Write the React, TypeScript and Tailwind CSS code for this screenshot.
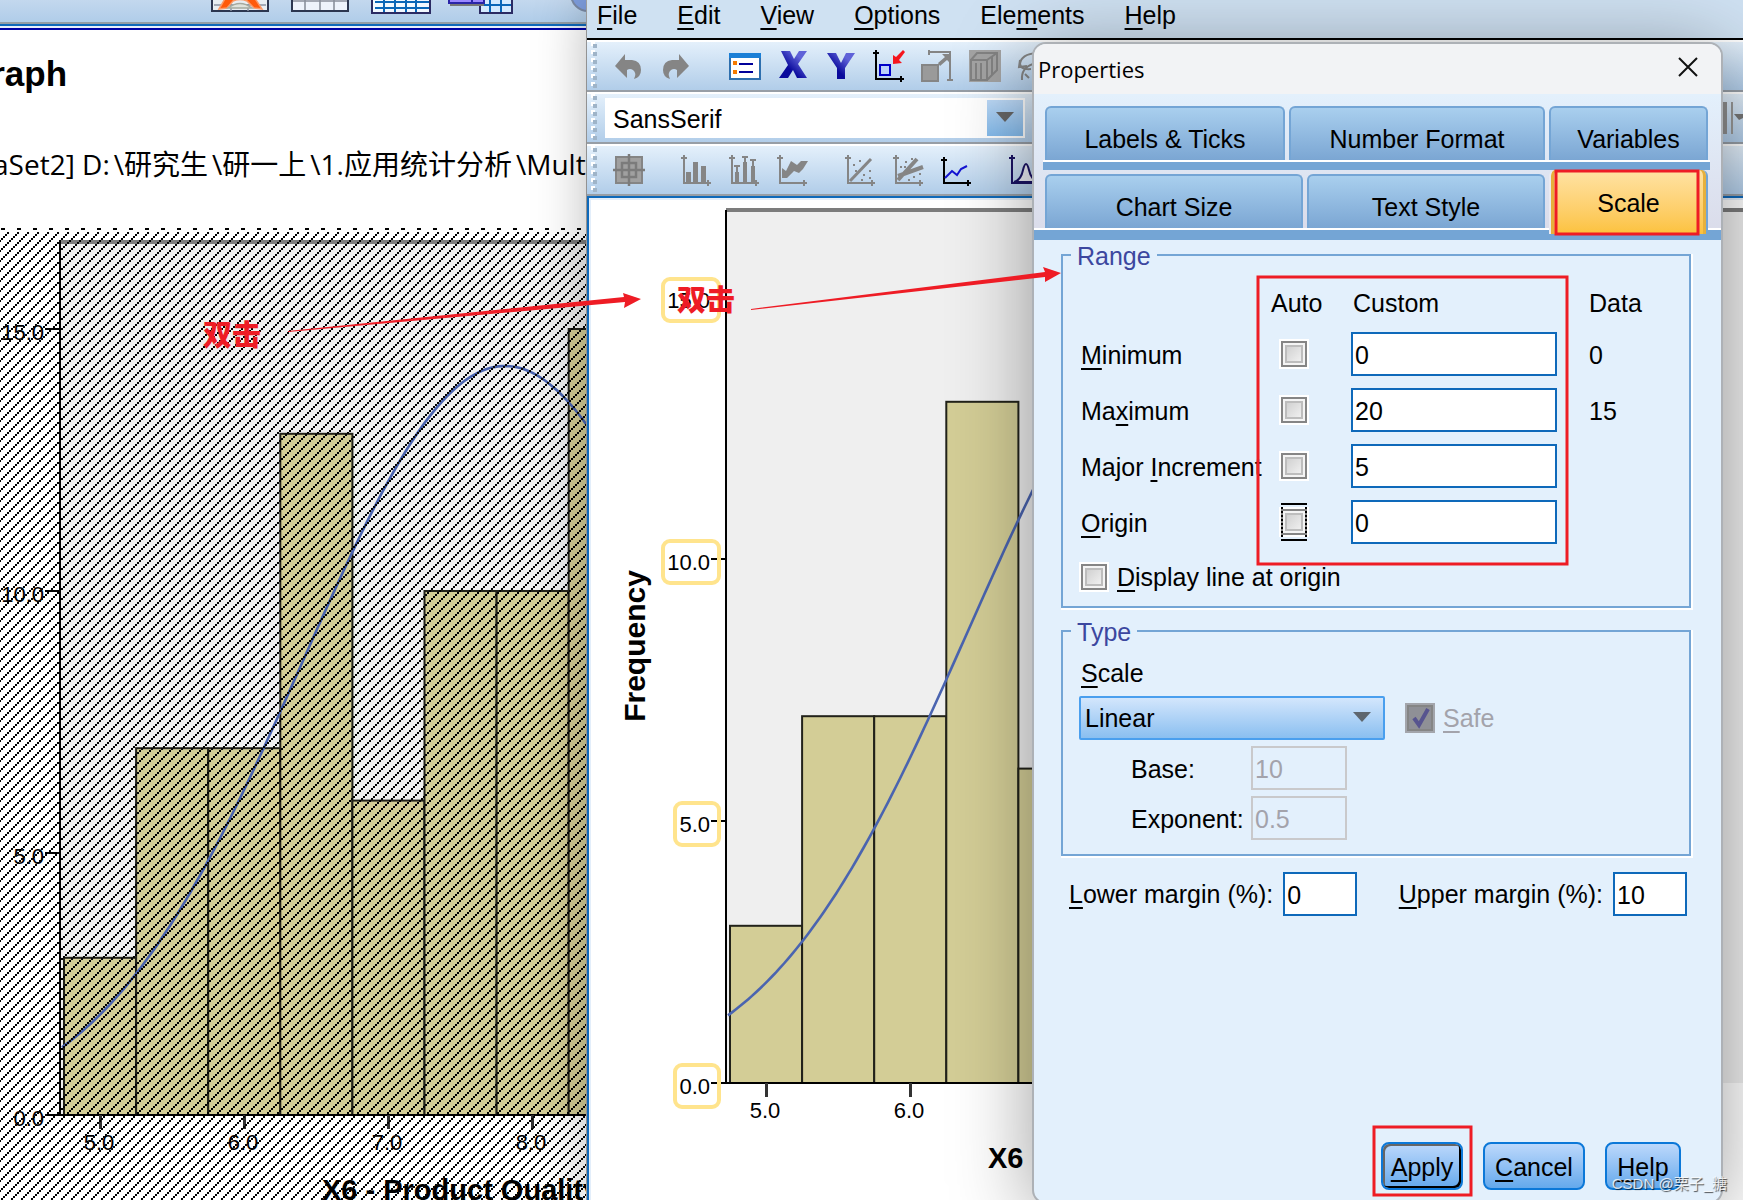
import React, { useState } from 'react';

const BAR_WIDTH = 72.1;
const UNIT = 52.4;
const BASE_Y = 873;
const COUNTS = [3, 7, 7, 13, 6, 10, 10, 15];

const curvePath = () => {
    const points: string[] = [];
    for (let x = 2; x <= 640; x += 4) {
        const y = BASE_Y - 749 * Math.exp(-((x - 445) ** 2) / (2 * 202 * 202));
        points.push(`${x},${y.toFixed(1)}`);
    }
    return points.join(' ');
};

interface HistogramProps {
    x: number;
    y: number;
    selected?: boolean;
    showYTitle?: boolean;
}

const Histogram: React.FC<HistogramProps> = ({ x, y, selected = false, showYTitle = false }) => (
    <g transform={`translate(${x} ${y})`} fontFamily='"Liberation Sans", Arial, sans-serif'>
        <rect x={0} y={0} width={2000} height={BASE_Y} fill="#efefef" />
        <rect x={0} y={-2} width={2000} height={4} fill="#7c7c7c" />
        {COUNTS.map((count, i) => (
            <rect
                key={i}
                x={4 + i * BAR_WIDTH}
                y={BASE_Y - count * UNIT}
                width={BAR_WIDTH}
                height={count * UNIT}
                fill="#d3cd96"
                stroke="#22221a"
                strokeWidth={2}
            />
        ))}
        <polyline points={curvePath()} fill="none" stroke="#4a64b0" strokeWidth={2.6} />
        <rect x={-1} y={0} width={2} height={BASE_Y} fill="#000" />
        <rect x={-1} y={BASE_Y - 1} width={900} height={2} fill="#000" />
        {[0, 5, 10, 15].map((value) => {
            const tickY = Math.round(BASE_Y - value * UNIT);
            const boxX = value >= 10 ? -63 : -51;
            return (
                <g key={value}>
                    <rect x={-15} y={tickY - 1} width={15} height={2} fill="#000" />
                    {selected && (
                        <rect x={boxX} y={tickY - 18} width={-7 - boxX} height={42} rx={7} fill="none" stroke="#ffe48d" strokeWidth={4} />
                    )}
                    <text x={-16} y={tickY + 11} fontSize={22} textAnchor="end">{value.toFixed(1)}</text>
                </g>
            );
        })}
        {[5, 6, 7, 8].map((value, i) => (
            <g key={value}>
                <rect x={39 + i * 144} y={BASE_Y} width={3} height={14} fill="#333" />
                <text x={39 + i * 144} y={908} fontSize={22} textAnchor="middle">{value.toFixed(1)}</text>
            </g>
        ))}
        <text x={262} y={958} fontSize={29} fontWeight="bold">X6 - Product Quality</text>
        {showYTitle && (
            <text transform="translate(-81 436) rotate(-90)" fontSize={30} fontWeight="bold" textAnchor="middle">Frequency</text>
        )}
    </g>
);

/* ---------- output viewer behind the editor ---------- */

const ViewerToolbar = () => (
    <svg className="block h-[22px] w-full shrink-0" aria-hidden="true">
        <defs>
            <linearGradient id="viewerBar" x1="0" y1="0" x2="0" y2="1">
                <stop offset="0" stopColor="#c3d8ee" />
                <stop offset="1" stopColor="#b0cde9" />
            </linearGradient>
        </defs>
        <rect width="100%" height="22" fill="url(#viewerBar)" />
        <g>
            <rect x="212" y="-10" width="56" height="21" fill="#e8edf2" stroke="#2c3650" strokeWidth="2" />
            <path d="M231 11V4M248 11V4M214 5H266" stroke="#8a93a3" strokeWidth="1.5" />
            <path d="M219 9L226 -3H254L262 9L254 8L247 1Q240 -2 233 1L227 8Z" fill="#ff5a0a" stroke="#fb9a68" strokeWidth="1.5" />
            <path d="M228 8Q240 -1 252 8Z" fill="#dfe3dc" stroke="#a5aaa0" strokeWidth="1.5" />
        </g>
        <g>
            <rect x="292" y="-10" width="56" height="21" fill="#eef2fb" stroke="#2c3650" strokeWidth="2" />
            <path d="M305 -4V10M320 -4V10M334 -4V10M293 1H347" stroke="#8a8f9c" strokeWidth="1.6" />
        </g>
        <g>
            <rect x="372" y="-10" width="58" height="23" fill="#f2f8ff" stroke="#2b2b63" strokeWidth="2" />
            <path d="M375 2H429M375 8H429M384 -4V12M395 -4V12M406 -4V12M416 -4V12" stroke="#0a66b8" strokeWidth="2" />
        </g>
        <g>
            <rect x="480" y="-10" width="32" height="23" fill="#d4eaff" stroke="#2b2b63" strokeWidth="2" />
            <path d="M481 5H511M490 -4V12M501 -4V12" stroke="#0a66b8" strokeWidth="2" />
            <rect x="450" y="4" width="34" height="2" fill="#777" />
            <rect x="449" y="-6" width="35" height="9" fill="#9b88ff" stroke="#2a24a8" strokeWidth="2" />
            <path d="M472 -4V3" stroke="#2a24a8" strokeWidth="2" />
        </g>
        <circle cx="588" cy="-6" r="17" fill="#7f9fe0" stroke="#7c8ba6" strokeWidth="2" />
    </svg>
);

const pathParts = ['研究生', '研一上', '1.应用统计分析', 'Multivariate.sav'];

const ViewerWindow = () => (
    <div className="flex h-full w-full flex-col overflow-hidden bg-white">
        <ViewerToolbar />
        <div className="h-[2px] shrink-0 bg-[#939da6]" />
        <div className="h-[2px] shrink-0 bg-[#0e69ba]" />
        <div className="h-[2px] shrink-0 bg-[#e6f0fb]" />
        <div className="h-[2px] shrink-0 bg-[#0000a4]" />
        <h1 className="-ml-9 pt-6 text-[35px] leading-10 font-bold text-black">Graph</h1>
        <p className="-ml-[62px] flex pt-12 font-['Open_Sans','Noto_Sans_CJK_SC',sans-serif] text-[28px] leading-[44px] font-normal whitespace-nowrap text-black">
            <span>[DataSet2] D:</span>
            {pathParts.map((part) => (
                <span key={part} className="pl-1">
                    {'\\' + part}
                </span>
            ))}
        </p>
        <svg className="mt-[42px] min-h-0 w-full flex-1">
            <defs>
                <pattern id="hatch" x="-1" y="4" width="10" height="10" patternUnits="userSpaceOnUse">
                    <path d="M8 0h2v2h-2zM6 2h2v2h-2zM4 4h2v2h-2zM2 6h2v2h-2zM0 8h2v2h-2z" fill="#000" shapeRendering="crispEdges" />
                </pattern>
            </defs>
            <Histogram x={60} y={14} />
            <rect x="0" y="4" width="100%" height="100%" fill="url(#hatch)" />
            <path d="M1 1H2000" stroke="#000" strokeWidth="2" strokeDasharray="4 12" />
        </svg>
    </div>
);

/* ---------- chart editor ---------- */

interface MnemonicProps {
    text: string;
    at?: number;
}

const Mnemonic: React.FC<MnemonicProps> = ({ text, at = 0 }) => (
    <>
        {text.slice(0, at)}
        <span className="underline decoration-2 underline-offset-4">{text[at]}</span>
        {text.slice(at + 1)}
    </>
);

const menus = [
    { text: 'File' },
    { text: 'Edit' },
    { text: 'View' },
    { text: 'Options' },
    { text: 'Elements', at: 3 },
    { text: 'Help' },
];

const Grip = () => (
    <svg className="h-[48px] w-[8px] shrink-0" aria-hidden="true">
        <defs>
            <pattern id="grip" width="6" height="8" patternUnits="userSpaceOnUse">
                <rect x="0" y="0" width="4" height="4" fill="#fff" />
                <rect x="2" y="2" width="4" height="4" fill="#9fb4c8" />
            </pattern>
        </defs>
        <rect width="6" height="48" fill="url(#grip)" />
    </svg>
);

interface ToolRowProps {
    children: React.ReactNode;
}

const ToolRow: React.FC<ToolRowProps> = ({ children }) => (
    <div className="flex h-[52px] shrink-0 items-center border-t-2 border-b-2 border-t-white border-b-[#979ea6] bg-linear-to-b from-[#e4f0fb] to-[#b1cde9] pl-1">
        <Grip />
        {children}
    </div>
);

interface ToolButtonProps {
    label: string;
    gap?: boolean;
    children: React.ReactNode;
}

const ToolButton: React.FC<ToolButtonProps> = ({ label, gap = false, children }) => (
    <button type="button" aria-label={label} className={`h-8 w-8 shrink-0 ${gap ? 'ml-5' : ''}`}>
        <svg viewBox="0 0 32 32" className="h-8 w-8">{children}</svg>
    </button>
);

const GREY = '#858585';

const Axes: React.FC<{ color?: string }> = ({ color = GREY }) => (
    <path d="M3 1V29H30M0 4H6M27 26V32" fill="none" stroke={color} strokeWidth="2" />
);

const ChartEditor = () => (
    <section aria-label="Chart Editor" className="absolute inset-y-0 right-0 left-[587px] flex flex-col overflow-hidden bg-white shadow-[0_0_50px_rgba(0,0,0,0.28),0_0_0_1px_#aaa]">
        <nav className="flex h-[40px] shrink-0 gap-10 border-b-2 border-black bg-[#cfe1f2] pl-[10px]">
            {menus.map((menu) => (
                <button key={menu.text} type="button" className="h-[30px] leading-[30px]">
                    <Mnemonic text={menu.text} at={menu.at} />
                </button>
            ))}
        </nav>
        <ToolRow>
            <div className="flex items-center gap-4 pl-[14px]">
                <ToolButton label="Undo">
                    <path d="M2 16L12 4V10H19Q28 11 28 20Q28 27 21 29Q24 23 20 20Q17 18 14 20V28Z" fill={GREY} />
                </ToolButton>
                <ToolButton label="Redo">
                    <path d="M28 16L18 4V10H11Q2 11 2 20Q2 27 9 29Q6 23 10 20Q13 18 16 20V28Z" fill={GREY} />
                </ToolButton>
                <ToolButton label="Properties" gap>
                    <rect x="1" y="4" width="30" height="25" fill="#fff" stroke="#2e6fae" strokeWidth="2" />
                    <rect x="0" y="3" width="32" height="5" fill="#1b7fd6" />
                    <path d="M4 11h4v4h-4zM4 20h4v4h-4z" fill="#f57a00" />
                    <path d="M10 14H24M10 22H24" stroke="#00009a" strokeWidth="2" />
                </ToolButton>
                <ToolButton label="Select X axis">
                    <defs>
                        <linearGradient id="letter" x1="0" y1="1" x2="1" y2="0">
                            <stop offset="0.35" stopColor="#0a0a9c" />
                            <stop offset="0.75" stopColor="#5f62d8" />
                        </linearGradient>
                    </defs>
                    <path d="M4 1H13L17 9L22 1H30L21 14L30 28H20L16 20L11 28H2L11 15Z" fill="url(#letter)" />
                </ToolButton>
                <ToolButton label="Select Y axis">
                    <path d="M2 3H11L16 13L21 3H30L20 18V29H12V18Z" fill="url(#letter)" />
                </ToolButton>
                <ToolButton label="Rescale chart">
                    <path d="M3 0V29H31M0 3H6M28 26V32" fill="none" stroke="#000" strokeWidth="2" />
                    <rect x="7" y="15" width="10" height="10" fill="#bcd2fa" stroke="#0000c8" strokeWidth="2" />
                    <path d="M20 14V5L23 7L30 0L32 2L26 10L29 13Z" fill="#f5151d" />
                </ToolButton>
                <ToolButton label="Scale to data">
                    <path d="M8 2H29V30M8 0V5M26 30H32" fill="none" stroke={GREY} strokeWidth="2" />
                    <rect x="1" y="15" width="16" height="16" fill="#9a9a9a" stroke={GREY} strokeWidth="2" />
                    <path d="M17 13L24 7L21 4H29V13L26 10L19 16Z" fill={GREY} />
                </ToolButton>
                <ToolButton label="3-D rotation">
                    <rect width="32" height="32" fill="#a3a3a3" />
                    <path d="M2 10H18V30H2ZM2 10L8 3H28V20L18 30M18 10L28 3M7 13V30M12 13V30M23 7V25" fill="none" stroke="#828282" strokeWidth="2" />
                </ToolButton>
                <ToolButton label="Transpose">
                    <path d="M20 3Q4 4 3 14Q4 20 14 19M3 10L2 17L10 16M16 14Q4 18 5 30M8 24L12 28" fill="none" stroke={GREY} strokeWidth="2" />
                </ToolButton>
            </div>
        </ToolRow>
        <ToolRow>
            <div className="relative ml-[6px] h-10 w-[420px] shrink-0">
                <select aria-label="Font" className="h-full w-full appearance-none bg-white pt-[2px] pl-2 outline-none">
                    <option>SansSerif</option>
                </select>
                <span className="pointer-events-none absolute top-[2px] right-[2px] flex h-9 w-9 justify-center bg-linear-to-b from-[#bcd9f7] to-[#84bbec] pt-3">
                    <svg width="18" height="10"><path d="M0 0H18L9 10Z" fill="#666" /></svg>
                </span>
            </div>
            <svg className="mr-0 ml-auto h-8 w-[24px] shrink-0" aria-hidden="true">
                <rect x="1" y="0" width="7" height="32" fill="#909090" />
                <rect x="12" y="0" width="2" height="32" fill="#999" />
                <path d="M15 12H24V16L20 18Z" fill="#777" />
            </svg>
        </ToolRow>
        <ToolRow>
            <div className="flex items-center gap-4 pl-[14px]">
                <ToolButton label="Grid lines">
                    <rect x="3" y="3" width="26" height="26" fill="#a0a0a0" stroke={GREY} strokeWidth="2" />
                    <path d="M16 0V32M0 16H32M9 9H23V23H9Z" fill="none" stroke="#7b7b7b" strokeWidth="2.5" />
                </ToolButton>
                <ToolButton label="Bar chart" gap>
                    <Axes />
                    <path d="M5 18h5v10h-5zM12 8h5v20h-5zM20 12h5v16h-5z" fill={GREY} />
                </ToolButton>
                <ToolButton label="Error bars">
                    <Axes />
                    <path d="M6 18h4v10h-4zM14 8h4v20h-4zM22 12h4v16h-4z" fill={GREY} />
                    <path d="M8 18V12M5 12H11M16 8V2M13 3H19M24 12V6M21 6H27" stroke={GREY} strokeWidth="2" />
                </ToolButton>
                <ToolButton label="Interpolation line">
                    <Axes />
                    <path d="M5 14L9 17L14 7L20 11L24 7H31L26 15L22 19L17 17L10 24L5 24Z" fill={GREY} />
                </ToolButton>
                <ToolButton label="Fit line" gap>
                    <Axes />
                    <path d="M5 27L26 5" stroke={GREY} strokeWidth="3" />
                    <path d="M8 10h2v2h-2zM14 6h2v2h-2zM10 16h2v2h-2zM18 20h2v2h-2zM24 16h2v2h-2zM16 25h2v2h-2zM24 23h2v2h-2z" fill={GREY} />
                </ToolButton>
                <ToolButton label="Fit subgroups">
                    <Axes />
                    <path d="M5 26L24 5M5 22L30 13" stroke={GREY} strokeWidth="4" />
                    <path d="M7 12h2v2h-2zM12 7h2v2h-2zM11 12h2v2h-2zM18 4h2v2h-2zM20 22h2v2h-2zM26 19h2v2h-2zM15 25h2v2h-2z" fill={GREY} />
                </ToolButton>
                <ToolButton label="Add line">
                    <path d="M3 3V29H30M0 6H6M27 26V32" fill="none" stroke="#000" strokeWidth="2" />
                    <path d="M4 24L11 17L16 21L20 15L26 12" fill="none" stroke="#1414d2" strokeWidth="2" />
                </ToolButton>
                <ToolButton label="Distribution curve" gap>
                    <path d="M5 28Q12 26 14 16Q17 4 20 16Q22 26 30 28Z" fill="#ececf4" stroke="#1c1464" strokeWidth="2" />
                    <path d="M3 1V29H30M0 4H6" fill="none" stroke="#1c1464" strokeWidth="2" />
                </ToolButton>
            </div>
        </ToolRow>
        <div className="min-h-0 flex-1 border-t-2 border-l-2 border-[#0e69ba]">
            <svg className="block h-full w-full">
                <path d="M1 2000V1H2000" fill="none" stroke="#e3eefa" strokeWidth="2" />
                <Histogram x={137} y={12} selected showYTitle />
            </svg>
        </div>
    </section>
);

/* ---------- properties dialog ---------- */

interface TabProps {
    label: string;
    className: string;
}

const Tab: React.FC<TabProps> = ({ label, className }) => (
    <button
        type="button"
        role="tab"
        aria-selected={false}
        className={`h-[54px] rounded-t-md border-2 border-b-0 border-[#74a5d5] bg-linear-to-b from-[#a9cfee] to-[#7ba6d3] pt-[10px] ${className}`}
    >
        {label}
    </button>
);

interface TickBoxProps {
    id: string;
    label?: string;
    checked?: boolean;
    disabled?: boolean;
    focused?: boolean;
    onChange?: () => void;
}

const TickBox: React.FC<TickBoxProps> = ({ id, label, checked = false, disabled = false, focused = false, onChange }) => (
    <span className={`relative flex h-[30px] w-[30px] shrink-0 items-center justify-center ${disabled ? 'bg-[#a3a5ab]' : 'bg-white'}`}>
        <input
            id={id}
            type="checkbox"
            aria-label={label}
            checked={checked}
            disabled={disabled}
            onChange={onChange}
            className={`h-[26px] w-[26px] appearance-none border-2 border-[#858585] ${disabled ? 'bg-[#8f9096]' : 'bg-linear-to-br from-[#c9c9c9] to-[#f8f8f8] shadow-[inset_0_0_0_2px_#f4f4f4,inset_0_0_0_4px_#bdbdbd]'}`}
        />
        {checked && (
            <svg viewBox="0 0 24 24" className="pointer-events-none absolute h-6 w-6">
                <path d="M6 12L11 19L20 3" fill="none" stroke="#57548f" strokeWidth="4" />
            </svg>
        )}
        {focused && (
            <span className="pointer-events-none absolute inset-x-[2px] -inset-y-1 border-x-2 border-y-2 border-x-black border-y-black [border-left-style:dotted] [border-right-style:dotted]" />
        )}
    </span>
);

const inputClass = 'h-[44px] w-full border-2 border-[#0e69ba] bg-white px-[2px] pt-[2px] outline-none disabled:border-[#c9c9cb] disabled:bg-transparent disabled:text-[#a3a3ab]';

const groupClass = 'border-2 border-[#74a5d5] pl-[18px] shadow-[1px_1px_0_1px_#fff]';

const legendClass = '-ml-[10px] px-[6px] pt-[2px] leading-[28px] text-[#3c479f]';

const initialRange = [
    { id: 'minimum', label: 'Minimum', at: 0, auto: false, value: '0', data: '0' },
    { id: 'maximum', label: 'Maximum', at: 2, auto: false, value: '20', data: '15' },
    { id: 'major', label: 'Major Increment', at: 6, auto: false, value: '5', data: '' },
    { id: 'origin', label: 'Origin', at: 0, auto: false, value: '0', data: '' },
];

const PropertiesDialog = () => {
    const [range, setRange] = useState(initialRange);
    const [showLine, setShowLine] = useState(false);

    const updateRow = (id: string, patch: Partial<(typeof initialRange)[number]>) => {
        setRange(range.map((row) => (row.id === id ? { ...row, ...patch } : row)));
    };

    return (
        <section
            role="dialog"
            aria-label="Properties"
            className="absolute top-[42px] -bottom-1 left-[1032px] flex w-[691px] flex-col overflow-hidden rounded-[14px] border-2 border-[#adb1b6] bg-[#e3f0fc] shadow-[0_10px_80px_rgba(0,0,0,0.38)]"
        >
            <header className="flex h-[50px] shrink-0 items-center justify-between bg-[#f2f3f5] pr-[23px] pl-1 font-['Open_Sans','Noto_Sans',sans-serif] text-[22px] text-black">
                <h2>Properties</h2>
                <button type="button" aria-label="Close" className="mb-1">
                    <svg width="20" height="20"><path d="M1 1L19 19M19 1L1 19" stroke="#111" strokeWidth="2" /></svg>
                </button>
            </header>

            <div role="tablist" className="shrink-0 bg-linear-to-b from-[#e3f0fc] to-[#dadbe9] pt-3">
                <div className="mr-[11px] ml-[9px] border-b-8 border-[#74a5d5]">
                    <div className="flex gap-1 border-b-2 border-white px-[2px]">
                        <Tab label="Labels & Ticks" className="w-[240px]" />
                        <Tab label="Number Format" className="w-[256px]" />
                        <Tab label="Variables" className="flex-1" />
                    </div>
                </div>
                <div className="border-b-[10px] border-[#74a5d5]">
                    <div className="flex h-[60px] items-end gap-1 border-b-2 border-white pr-[13px] pl-[11px]">
                        <Tab label="Chart Size" className="w-[258px]" />
                        <Tab label="Text Style" className="w-[238px]" />
                        <button
                            type="button"
                            role="tab"
                            aria-selected={true}
                            className="relative -mb-[6px] h-[64px] flex-1 rounded-t-md border-x-2 border-[#74a5d5] border-l-[#e9e9f2] bg-linear-to-b from-[#ffe3a3] to-[#fcc23c] pt-[2px] shadow-[inset_-3px_0_0_#e6b03c,inset_3px_0_0_#e6b03c]"
                        >
                            Scale
                        </button>
                    </div>
                </div>
            </div>

            <div className="flex min-h-0 flex-1 flex-col pr-[30px] pl-[27px]">
                <fieldset className={`${groupClass} pb-[14px]`}>
                    <legend className={legendClass}>Range</legend>
                    <div className="grid grid-cols-[190px_80px_206px_1fr] items-center gap-y-3 pt-[18px]">
                        <span className="col-start-2 pb-[2px]">Auto</span>
                        <span className="pb-[2px] pl-[2px]">Custom</span>
                        <span className="pb-[2px] pl-8">Data</span>
                        {range.map((row) => (
                            <React.Fragment key={row.id}>
                                <label htmlFor={row.id} className="pt-[2px] whitespace-nowrap">
                                    <Mnemonic text={row.label} at={row.at} />
                                </label>
                                <span className="pl-2">
                                    <TickBox
                                        id={`${row.id}-auto`}
                                        label={`${row.label} auto`}
                                        checked={row.auto}
                                        focused={row.id === 'origin'}
                                        onChange={() => updateRow(row.id, { auto: !row.auto })}
                                    />
                                </span>
                                <input
                                    id={row.id}
                                    type="text"
                                    value={row.value}
                                    onChange={(e) => updateRow(row.id, { value: e.target.value })}
                                    className={inputClass}
                                />
                                <span className="pt-[2px] pl-8">{row.data}</span>
                            </React.Fragment>
                        ))}
                    </div>
                    <div className="mt-[18px] -ml-[2px] flex items-center gap-2">
                        <TickBox id="origin-line" checked={showLine} onChange={() => setShowLine(!showLine)} />
                        <label htmlFor="origin-line"><Mnemonic text="Display line at origin" /></label>
                    </div>
                </fieldset>

                <fieldset className={`${groupClass} mt-2 pb-[14px]`}>
                    <legend className={legendClass}>Type</legend>
                    <label htmlFor="scale-type" className="mt-3 block"><Mnemonic text="Scale" /></label>
                    <div className="mt-2 -ml-[2px] flex items-center">
                        <div className="relative h-[44px] w-[306px]">
                            <select id="scale-type" className="h-full w-full appearance-none rounded-xs border-2 border-[#4a9fee] bg-linear-to-b from-[#d3e6fc] to-[#8abff0] px-1 outline-none">
                                <option>Linear</option>
                            </select>
                            <svg width="18" height="10" className="pointer-events-none absolute top-4 right-[14px]"><path d="M0 0H18L9 10Z" fill="#5e666e" /></svg>
                        </div>
                        <div className="ml-5 flex items-center gap-2">
                            <TickBox id="safe" checked disabled />
                            <label htmlFor="safe" className="text-[#a3a3ab]"><Mnemonic text="Safe" /></label>
                        </div>
                    </div>
                    <div className="mt-[6px] grid grid-cols-[120px_96px] items-center gap-y-[6px] pl-[50px]">
                        <label htmlFor="base" className="pt-[2px]">Base:</label>
                        <input id="base" type="text" disabled defaultValue="10" className={inputClass} />
                        <label htmlFor="exponent" className="pt-[2px]">Exponent:</label>
                        <input id="exponent" type="text" disabled defaultValue="0.5" className={inputClass} />
                    </div>
                </fieldset>

                <div className="mt-4 flex items-center justify-between pr-1 pl-2">
                    <div className="flex items-center gap-[10px]">
                        <label htmlFor="lower-margin"><Mnemonic text="Lower margin (%):" /></label>
                        <span className="w-[74px]"><input id="lower-margin" type="text" defaultValue="0" className={inputClass} /></span>
                    </div>
                    <div className="flex items-center gap-[10px]">
                        <label htmlFor="upper-margin"><Mnemonic text="Upper margin (%):" /></label>
                        <span className="w-[74px]"><input id="upper-margin" type="text" defaultValue="10" className={inputClass} /></span>
                    </div>
                </div>

                <div className="mt-auto mb-3 flex h-[48px] justify-end gap-5 pr-[10px]">
                    <button type="button" className="w-[82px] rounded-lg border-2 border-[#0c78d8] bg-linear-to-b from-[#bcd8fb] to-[#64a9ec] pt-[2px] shadow-[inset_-2px_-2px_0_#000,inset_2px_2px_0_#666]"><Mnemonic text="Apply" /></button>
                    <button type="button" className="w-[102px] rounded-lg border-2 border-[#0c78d8] bg-linear-to-b from-[#bcd8fb] to-[#64a9ec] pt-[2px]"><Mnemonic text="Cancel" /></button>
                    <button type="button" className="w-[76px] rounded-lg border-2 border-[#0c78d8] bg-linear-to-b from-[#bcd8fb] to-[#64a9ec] pt-[2px]"><Mnemonic text="Help" /></button>
                </div>
            </div>
        </section>
    );
};

/* ---------- red marks drawn over the windows ---------- */

const Annotations = () => (
    <div className="pointer-events-none absolute inset-0 font-['Noto_Sans_CJK_SC',sans-serif] text-[29px] leading-8 font-black text-[#ee1c25]">
        <svg className="absolute inset-0 h-full w-full">
            <path d="M288 331L624 297L623 293L641 299L624 308L625 302L288 332Z" fill="#ee1c25" />
            <path d="M751 309L1045 272L1043 267L1061 273L1045 282L1045 277L751 310Z" fill="#ee1c25" />
            <rect x="1258" y="277" width="309" height="287" fill="none" stroke="#ee1c25" strokeWidth="3" />
            <rect x="1556" y="171" width="142" height="63" fill="none" stroke="#ee1c25" strokeWidth="3" />
            <rect x="1374" y="1127" width="97" height="68" fill="none" stroke="#ee1c25" strokeWidth="3" />
        </svg>
        <span className="absolute top-[317px] left-[203px]">双击</span>
        <span className="absolute top-[282px] left-[677px]">双击</span>
        <span className="absolute right-4 bottom-1 font-['Liberation_Sans','Noto_Sans_CJK_SC',sans-serif] text-[15px] leading-6 font-normal text-white/80 [text-shadow:1px_1px_1px_rgba(0,0,0,0.7)]">CSDN @栗子_糖</span>
    </div>
);

export default function App() {
    return (
        <main className="relative h-screen overflow-hidden bg-white font-['Liberation_Sans',Arial,sans-serif] text-[25px] leading-[30px] text-black">
            <ViewerWindow />
            <ChartEditor />
            <PropertiesDialog />
            <Annotations />
        </main>
    );
}
